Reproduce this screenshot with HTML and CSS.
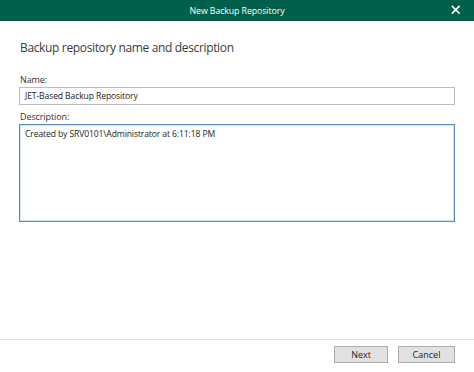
FILE: index.html
```html
<!DOCTYPE html>
<html>
<head>
<meta charset="utf-8">
<link rel="stylesheet" href="styles.css">
</head>
<body>
<div class="window">
  <div class="titlebar">
    <span class="title">New Backup Repository</span>
    <svg class="close" width="10" height="10" viewBox="0 0 10 10"><path d="M1.5 1.5 L8 8 M8 1.5 L1.5 8" stroke="#fff" stroke-width="1.7" stroke-linecap="square"/></svg>
  </div>
  <div class="content">
    <h1 class="heading">Backup repository name and description</h1>
    <label class="label">Name:</label>
    <div class="input">JET-Based Backup Repository</div>
    <label class="label label-desc">Description:</label>
    <div class="textarea">Created by SRV0101\Administrator at 6:11:18 PM</div>
  </div>
  <div class="footer">
    <button class="btn btn-next">Next</button>
    <button class="btn btn-cancel">Cancel</button>
  </div>
</div>
</body>
</html>
```
FILE: styles.css
```css
html, body {
  margin: 0;
  padding: 0;
  background: #ffffff;
}
body {
  font-family: "Open Sans", "Noto Sans", sans-serif;
  color: #333;
}
.window {
  width: 474px;
  height: 372px;
  display: flex;
  flex-direction: column;
  background: #fff;
}
.titlebar {
  height: 21px;
  flex: none;
  background: #005f4b;
  display: flex;
  align-items: center;
  justify-content: center;
  position: relative;
}
.title {
  color: #fff;
  font-size: 8.8px;
  letter-spacing: -0.1px;
}
.close {
  position: absolute;
  right: 13px;
  top: 5px;
}
.content {
  flex: 1;
  padding: 0 19px;
  display: flex;
  flex-direction: column;
}
.heading {
  margin: 18px 0 0 1px;
  font-size: 12px;
  font-weight: normal;
  color: #3a3a3a;
  letter-spacing: -0.35px;
  line-height: 18px;
  height: 18px;
}
.label {
  font-size: 9px;
  color: #333;
  margin: 17px 0 0 1px;
  line-height: 12px;
  height: 12px;
  letter-spacing: -0.1px;
}
.label-desc {
  margin-top: 6px;
}
.input {
  margin-top: 1px;
  height: 18px;
  box-sizing: border-box;
  border: 1px solid #bdbdbd;
  font-size: 8.6px;
  letter-spacing: -0.12px;
  line-height: 16px;
  padding-left: 5px;
  color: #222;
}
.textarea {
  margin-top: 1px;
  height: 98px;
  box-sizing: border-box;
  border: 1px solid #5a8cc4;
  box-shadow: inset 0 0 0 1px #d3e2f2;
  font-size: 8.6px;
  letter-spacing: -0.12px;
  line-height: 14px;
  padding: 2px 5px;
  color: #222;
}
.footer {
  height: 33px;
  flex: none;
  border-top: 1px solid #e2e2e2;
  display: flex;
  justify-content: flex-end;
  align-items: flex-start;
  gap: 10px;
  padding: 6px 19px 0 0;
  box-sizing: border-box;
}
.btn {
  height: 17px;
  background: #e1e1e1;
  border: 1px solid #adadad;
  font-family: "Open Sans", "Noto Sans", sans-serif;
  font-size: 9px;
  color: #222;
  padding: 0;
  margin: 0;
  line-height: 15px;
}
.btn-next { width: 54px; }
.btn-cancel { width: 57px; }
```
